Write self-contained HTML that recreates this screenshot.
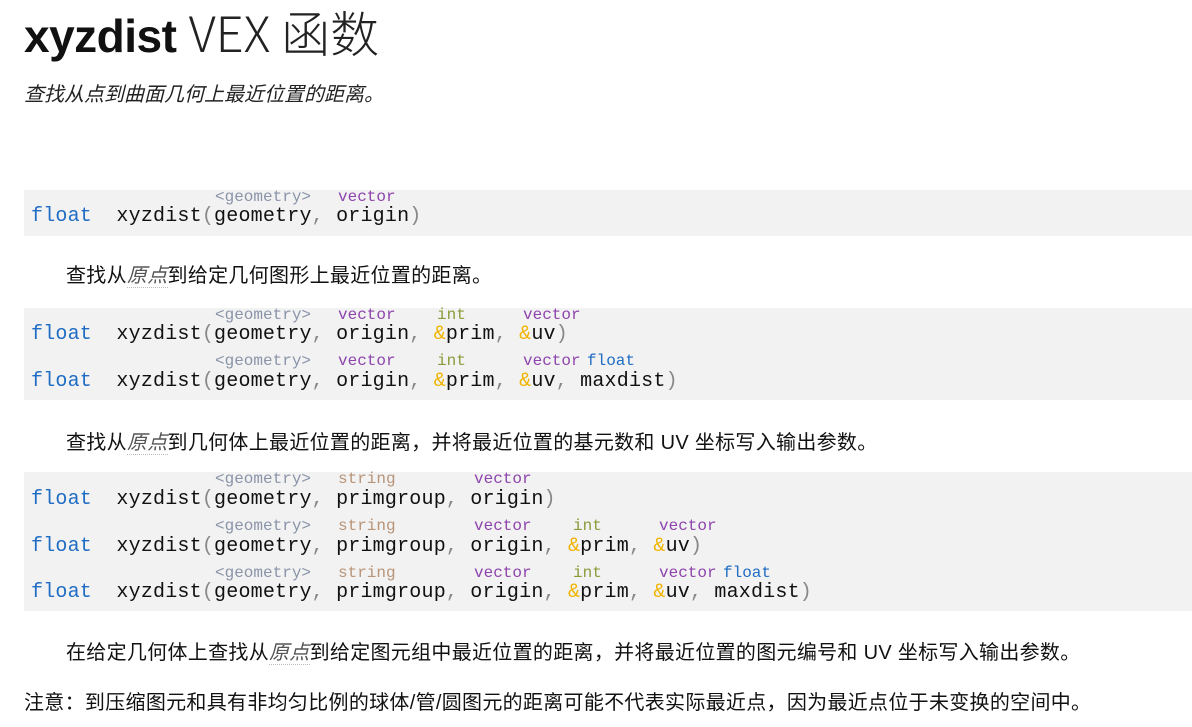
<!DOCTYPE html>
<html><head><meta charset="utf-8"><style>
body{margin:0;width:1192px;height:727px;background:#fff;position:relative;overflow:hidden;font-family:"Liberation Sans","Noto Sans CJK SC",sans-serif;color:#111}
.a{position:absolute;white-space:pre}
h1{position:absolute;left:24px;top:4px;margin:0;font-size:46px;line-height:56px;font-weight:bold;white-space:nowrap;letter-spacing:-0.5px}
h1 span{color:#222;font-family:"Noto Sans CJK SC","Liberation Sans",sans-serif;font-weight:300;font-size:49px;letter-spacing:0}
.sub{left:24px;top:78px;font-size:20px;font-style:italic;color:#222}
.blk{position:absolute;left:24px;width:1168px;background:#f2f2f2}
.m{font-family:"Liberation Mono",monospace;font-size:20px;line-height:24px;color:#111;letter-spacing:0.2px}
.n{font-family:"Liberation Mono",monospace;font-size:16px;line-height:16px}
.f{color:#1f6cc4}.g{color:#8a94a8}.v{color:#8e44ad}.i{color:#8a9c3a}.s{color:#b89478}.p{color:#888}.amp{color:#f0b400}
.t{font-size:20px;left:66px;color:#111;letter-spacing:0.3px}
.t i{color:#555;border-bottom:1px dotted #bbb}
.cj{font-family:"Noto Sans CJK SC",sans-serif}
</style></head><body>
<h1>xyzdist <span>VEX 函数</span></h1>
<div class="a sub">查找从点到曲面几何上最近位置的距离。</div>

<div class="blk" style="top:190px;height:46px"></div>
<div class="a n g" style="left:215px;top:189px">&lt;geometry&gt;</div><div class="a n v" style="left:338px;top:189px">vector</div>
<div class="a m" style="left:31px;top:205px"><span class="f">float</span>  xyzdist<span class="p">(</span>geometry<span class="p">,</span> origin<span class="p">)</span></div>

<div class="a t" style="top:259px">查找从<i>原点</i>到给定几何图形上最近位置的距离。</div>

<div class="blk" style="top:308px;height:92px"></div>
<div class="a n g" style="left:215px;top:307px">&lt;geometry&gt;</div><div class="a n v" style="left:338px;top:307px">vector</div><div class="a n i" style="left:437px;top:307px">int</div><div class="a n v" style="left:523px;top:307px">vector</div>
<div class="a m" style="left:31px;top:323px"><span class="f">float</span>  xyzdist<span class="p">(</span>geometry<span class="p">,</span> origin<span class="p">,</span> <span class="amp">&amp;</span>prim<span class="p">,</span> <span class="amp">&amp;</span>uv<span class="p">)</span></div>
<div class="a n g" style="left:215px;top:353px">&lt;geometry&gt;</div><div class="a n v" style="left:338px;top:353px">vector</div><div class="a n i" style="left:437px;top:353px">int</div><div class="a n v" style="left:523px;top:353px">vector</div><div class="a n f" style="left:587px;top:353px">float</div>
<div class="a m" style="left:31px;top:370px"><span class="f">float</span>  xyzdist<span class="p">(</span>geometry<span class="p">,</span> origin<span class="p">,</span> <span class="amp">&amp;</span>prim<span class="p">,</span> <span class="amp">&amp;</span>uv<span class="p">,</span> maxdist<span class="p">)</span></div>

<div class="a t" style="top:426px">查找从<i>原点</i>到几何体上最近位置的距离<span class="cj">，</span>并将最近位置的基元数和 UV 坐标写入输出参数。</div>

<div class="blk" style="top:472px;height:139px"></div>
<div class="a n g" style="left:215px;top:471px">&lt;geometry&gt;</div><div class="a n s" style="left:338px;top:471px">string</div><div class="a n v" style="left:474px;top:471px">vector</div>
<div class="a m" style="left:31px;top:488px"><span class="f">float</span>  xyzdist<span class="p">(</span>geometry<span class="p">,</span> primgroup<span class="p">,</span> origin<span class="p">)</span></div>
<div class="a n g" style="left:215px;top:518px">&lt;geometry&gt;</div><div class="a n s" style="left:338px;top:518px">string</div><div class="a n v" style="left:474px;top:518px">vector</div><div class="a n i" style="left:573px;top:518px">int</div><div class="a n v" style="left:659px;top:518px">vector</div>
<div class="a m" style="left:31px;top:535px"><span class="f">float</span>  xyzdist<span class="p">(</span>geometry<span class="p">,</span> primgroup<span class="p">,</span> origin<span class="p">,</span> <span class="amp">&amp;</span>prim<span class="p">,</span> <span class="amp">&amp;</span>uv<span class="p">)</span></div>
<div class="a n g" style="left:215px;top:565px">&lt;geometry&gt;</div><div class="a n s" style="left:338px;top:565px">string</div><div class="a n v" style="left:474px;top:565px">vector</div><div class="a n i" style="left:573px;top:565px">int</div><div class="a n v" style="left:659px;top:565px">vector</div><div class="a n f" style="left:723px;top:565px">float</div>
<div class="a m" style="left:31px;top:581px"><span class="f">float</span>  xyzdist<span class="p">(</span>geometry<span class="p">,</span> primgroup<span class="p">,</span> origin<span class="p">,</span> <span class="amp">&amp;</span>prim<span class="p">,</span> <span class="amp">&amp;</span>uv<span class="p">,</span> maxdist<span class="p">)</span></div>

<div class="a t" style="top:636px">在给定几何体上查找从<i>原点</i>到给定图元组中最近位置的距离<span class="cj">，</span>并将最近位置的图元编号和 UV 坐标写入输出参数。</div>
<div class="a t" style="left:24px;top:686px">注意<span class="cj">：</span>到压缩图元和具有非均匀比例的球体/管/圆图元的距离可能不代表实际最近点<span class="cj">，</span>因为最近点位于未变换的空间中。</div>
</body></html>
